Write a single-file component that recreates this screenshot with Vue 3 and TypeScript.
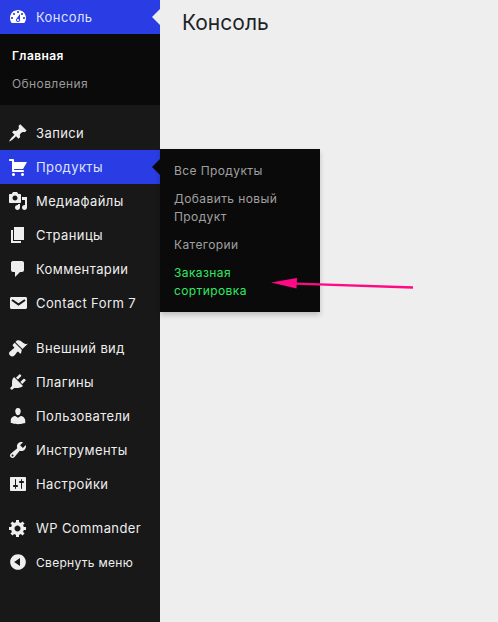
<script setup lang="ts">
interface Item { label: string; d: string; gap?: boolean; current?: boolean; flyout?: boolean; small?: boolean; tight?: boolean }
const icons = {
  dash: 'M3.76 16h12.48c1.1-1.37 1.76-3.11 1.76-5 0-4.42-3.58-8-8-8s-8 3.58-8 8c0 1.89.66 3.63 1.76 5zM10 4c.55 0 1 .45 1 1s-.45 1-1 1-1-.45-1-1 .45-1 1-1zM6 6c.55 0 1 .45 1 1s-.45 1-1 1-1-.45-1-1 .45-1 1-1zm8 0c.55 0 1 .45 1 1s-.45 1-1 1-1-.45-1-1 .45-1 1-1zm-5.37 5.55L12 7v6c0 1.1-.9 2-2 2s-2-.9-2-2c0-.57.24-1.08.63-1.45zM4 10c.55 0 1 .45 1 1s-.45 1-1 1-1-.45-1-1 .45-1 1-1zm12 0c.55 0 1 .45 1 1s-.45 1-1 1-1-.45-1-1 .45-1 1-1zm-5 3c0-.55-.45-1-1-1s-1 .45-1 1 .45 1 1 1 1-.45 1-1z',
  pin: 'M10.44 3.02l1.82-1.82 6.36 6.35-1.83 1.82c-1.05-.68-2.48-.57-3.41.36l-.75.75c-.92.93-1.04 2.35-.35 3.41l-1.83 1.82-2.41-2.41-2.8 2.79c-.42.42-3.38 2.71-3.8 2.29s1.86-3.39 2.28-3.81l2.79-2.79L4.1 9.36l1.83-1.82c1.05.69 2.48.57 3.4-.36l.75-.75c.93-.92 1.05-2.35.36-3.41z',
  cart: 'M6 13h9c.55 0 1 .45 1 1s-.45 1-1 1H5c-.55 0-1-.45-1-1V4H2c-.55 0-1-.45-1-1s.45-1 1-1h3c.55 0 1 .45 1 1v2h13l-4 7H6v1zm-.5 3c.83 0 1.5.67 1.5 1.5S6.33 19 5.5 19 4 18.33 4 17.5 4.67 16 5.5 16zm9 0c.83 0 1.5.67 1.5 1.5s-.67 1.5-1.5 1.5-1.5-.67-1.5-1.5.67-1.5 1.5-1.5z',
  media: 'M13 11V4c0-.55-.45-1-1-1h-1.67L9 1H5L3.67 3H2c-.55 0-1 .45-1 1v7c0 .55.45 1 1 1h10c.55 0 1-.45 1-1zM7 4.5c1.38 0 2.5 1.12 2.5 2.5S8.38 9.5 7 9.5 4.5 8.38 4.5 7 5.62 4.5 7 4.5zM14 6h5v10.5c0 1.38-1.12 2.5-2.5 2.5S14 17.88 14 16.5s1.12-2.5 2.5-2.5c.17 0 .34.02.5.05V9h-3V6zm-4 8.05V13h2v3.5c0 1.38-1.12 2.5-2.5 2.5S7 17.88 7 16.5 8.12 14 9.5 14c.17 0 .34.02.5.05z',
  page: 'M6 15V2h10v13H6zm-1 1h8v2H3V5h2v11z',
  comment: 'M5 2h9c1.1 0 2 .9 2 2v7c0 1.1-.9 2-2 2h-2l-5 5v-5H5c-1.1 0-2-.9-2-2V4c0-1.1.9-2 2-2z',
  mail: 'M3 4h14.5c.8 0 1.5.7 1.5 1.5v9c0 .8-.7 1.5-1.5 1.5H3.5C2.7 16 2 15.3 2 14.5v-9C2 4.7 2.7 4 3.5 4zM4.6 6.2 3.4 7.8l7.1 5 7.1-5-1.2-1.6-5.9 4.1z',
  brush: 'M14.48 11.06L7.41 3.99l1.5-1.5c.5-.56 2.3-.47 3.51.32 1.21.8 1.43 1.28 2.91 2.1 1.18.64 2.45 1.26 4.45.85zm-.71.71L6.7 4.7 4.93 6.47c-.39.39-.39 1.02 0 1.41l1.06 1.06c.39.39.39 1.03 0 1.42-.6.6-1.43 1.11-2.21 1.69-.35.26-.7.53-1.01.84C1.43 13.71 1 14.53 1 15.3c0 .78.29 1.51 1.02 2.24.73.73 1.45 1.02 2.23 1.02.78 0 1.6-.43 2.43-1.26.31-.31.58-.66.84-1.01.58-.78 1.09-1.61 1.69-2.21.39-.39 1.03-.39 1.42 0l1.06 1.06c.39.39 1.02.39 1.41 0z',
  plug: 'M13.11 4.36L9.87 7.6 8 5.73l3.24-3.24c.35-.34 1.05-.2 1.56.32.52.51.66 1.21.31 1.55zm-8 1.77l.91-1.12 9.01 9.01-1.19.84c-.71.71-2.63 1.16-3.82 1.16H6.14L4.9 17.26c-.59.59-1.54.59-2.12 0-.59-.58-.59-1.53 0-2.12l1.24-1.24v-3.88c0-1.13.4-3.19 1.09-3.89zm7.26 3.97l3.24-3.24c.34-.35 1.04-.21 1.55.31.52.51.66 1.21.31 1.55l-3.24 3.25z',
  user: 'M10 9.25c-2.27 0-2.73-3.44-2.73-3.44C7 4.02 7.82 2 9.97 2c2.16 0 2.98 2.02 2.71 3.81 0 0-.41 3.44-2.68 3.44zm0 2.57L12.72 10c2.39 0 4.52 2.33 4.52 4.53v2.49s-3.65 1.13-7.24 1.13c-3.65 0-7.24-1.13-7.24-1.13v-2.49c0-2.25 1.94-4.48 4.47-4.48z',
  tool: 'M16.68 9.77c-1.34 1.34-3.3 1.67-4.95.99l-5.41 6.52c-.99.99-2.59.99-3.58 0s-.99-2.59 0-3.57l6.52-5.42c-.68-1.65-.35-3.61.99-4.95 1.28-1.28 3.12-1.62 4.72-1.06l-2.89 2.89 2.82 2.82 2.86-2.87c.53 1.58.18 3.39-1.08 4.65zM3.81 16.21c.4.39 1.04.39 1.43 0 .4-.4.4-1.04 0-1.43-.39-.4-1.03-.4-1.43 0-.39.39-.39 1.03 0 1.43z',
  sliders: 'M18 16V4c0-.55-.45-1-1-1H3c-.55 0-1 .45-1 1v12c0 .55.45 1 1 1h14c.55 0 1-.45 1-1zM8 11h1c.55 0 1 .45 1 1s-.45 1-1 1H8v1.5c0 .28-.22.5-.5.5s-.5-.22-.5-.5V13H6c-.55 0-1-.45-1-1s.45-1 1-1h1V5.5c0-.28.22-.5.5-.5s.5.22.5.5V11zm5-2h-1c-.55 0-1-.45-1-1s.45-1 1-1h1V5.5c0-.28.22-.5.5-.5s.5.22.5.5V7h1c.55 0 1 .45 1 1s-.45 1-1 1h-1v5.5c0 .28-.22.5-.5.5s-.5-.22-.5-.5V9z',
  gear: 'M18 12h-2.18c-.17.7-.44 1.35-.81 1.93l1.54 1.54-2.1 2.1-1.54-1.54c-.58.36-1.23.63-1.91.79V19H8v-2.18c-.68-.16-1.33-.43-1.91-.79l-1.54 1.54-2.12-2.12 1.54-1.54c-.36-.58-.63-1.23-.79-1.91H1V9.03h2.17c.16-.7.44-1.35.8-1.94L2.43 5.55l2.1-2.1 1.54 1.54c.58-.37 1.24-.64 1.93-.81V2h3v2.18c.68.16 1.33.43 1.91.79l1.54-1.54 2.12 2.12-1.54 1.54c.36.59.64 1.24.8 1.94H18V12zm-8.5 1.5c1.66 0 3-1.34 3-3s-1.34-3-3-3-3 1.34-3 3 1.34 3 3 3z',
  collapse: 'M10 2.16c4.33 0 7.84 3.51 7.84 7.84s-3.51 7.84-7.84 7.84S2.16 14.33 2.16 10 5.71 2.16 10 2.16zm2 11.72V6.12L6.18 9.97z',
}
const items: Item[] = [
  { label: 'Записи', d: icons.pin, gap: true },
  { label: 'Продукты', d: icons.cart, current: true, flyout: true },
  { label: 'Медиафайлы', d: icons.media },
  { label: 'Страницы', d: icons.page },
  { label: 'Комментарии', d: icons.comment },
  { label: 'Contact Form 7', d: icons.mail },
  { label: 'Внешний вид', d: icons.brush, gap: true },
  { label: 'Плагины', d: icons.plug },
  { label: 'Пользователи', d: icons.user },
  { label: 'Инструменты', d: icons.tool },
  { label: 'Настройки', d: icons.sliders, tight: true },
  { label: 'WP Commander', d: icons.gear, gap: true },
  { label: 'Свернуть меню', d: icons.collapse, small: true },
]
const flyoutLinks = [
  { label: 'Все Продукты', on: false },
  { label: 'Добавить новый Продукт', on: false },
  { label: 'Категории', on: false },
  { label: 'Заказная сортировка', on: true },
]
</script>

<template>
  <div class="page">
    <aside class="sidebar">
      <a class="row current">
        <svg class="icon" viewBox="0 0 20 20"><path :d="icons.dash" fill-rule="evenodd" /></svg>
        <span class="label">Консоль</span>
        <i class="notch light"></i>
      </a>
      <div class="sub">
        <a class="sub-link strong">Главная</a>
        <a class="sub-link">Обновления</a>
      </div>
      <a
        v-for="item in items"
        :key="item.label"
        class="row"
        :class="{ current: item.current, gap: item.gap, small: item.small, tight: item.tight }"
      >
        <svg class="icon" viewBox="0 0 20 20"><path :d="item.d" fill-rule="evenodd" /></svg>
        <span class="label">{{ item.label }}</span>
        <template v-if="item.flyout">
          <i class="notch dark"></i>
          <div class="flyout">
            <span
              v-for="link in flyoutLinks"
              :key="link.label"
              class="fly-link"
              :class="{ on: link.on }"
            >{{ link.label }}</span>
          </div>
        </template>
      </a>
    </aside>
    <main class="content">
      <h1 class="title">Консоль</h1>
    </main>
    <svg class="arrow" width="498" height="622" viewBox="0 0 498 622">
      <path d="M413 287.5 296 283.6" stroke="#ff0a84" stroke-width="2.4" fill="none" />
      <path d="M271 282.5 297 278 296.5 288.5z" fill="#ff0a84" />
    </svg>
  </div>
</template>

<style>
html, body { margin: 0; background: #eee; }
</style>

<style scoped>
.page {
  position: relative;
  display: flex;
  width: 498px;
  height: 622px;
  overflow: hidden;
  background: #eee;
  font-family: Inter, "Noto Sans", sans-serif;
}
.sidebar {
  display: flex;
  flex-direction: column;
  flex: 0 0 160px;
  background: #181818;
}
.row {
  position: relative;
  display: flex;
  align-items: center;
  flex: 0 0 34px;
  color: #eee;
  font-size: 13px;
  letter-spacing: 0.4px;
}
.row.tight { flex-basis: 33px; }
.row.gap { margin-top: 11px; }
.row.current { background: #2a3ce4; color: #fff; }
.row.small { font-size: 12px; letter-spacing: 0.3px; }
.row.current .label { color: #dfe3ff; }
.icon {
  flex: none;
  width: 20px;
  height: 20px;
  margin-left: 8px;
  margin-right: 8px;
  fill: #eee;
}
.row.current .icon { fill: #fff; }
.notch {
  position: absolute;
  right: 0;
  top: 9px;
  width: 0;
  height: 0;
  border: 8px solid transparent;
  border-left-width: 0;
}
.notch.light { border-right-color: #eee; }
.notch.dark { border-right-color: #0a0a0a; }
.sub {
  display: flex;
  flex-direction: column;
  gap: 5px;
  padding: 10px 0 10px 12px;
  background: #0a0a0a;
}
.sub-link {
  font-size: 12px;
  line-height: 23px;
  letter-spacing: 0.4px;
  color: #9a9a9a;
}
.sub-link.strong { color: #fff; font-weight: 600; }
.flyout {
  position: absolute;
  left: 160px;
  top: -1px;
  box-sizing: border-box;
  width: 160px;
  height: 163px;
  padding: 13px 14px 0;
  display: flex;
  flex-direction: column;
  gap: 10px;
  background: #0a0a0a;
  box-shadow: 0 3px 5px rgba(0, 0, 0, 0.2);
  z-index: 2;
}
.fly-link {
  font-size: 12px;
  line-height: 18px;
  letter-spacing: 0.4px;
  color: #a0a0a0;
}
.fly-link.on { color: #2fe862; }
.content { flex: 1; padding: 9px 22px; }
.title {
  margin: 0;
  font-size: 21px;
  line-height: 27px;
  font-weight: 400;
  color: #1d2327;
}
.arrow { position: absolute; left: 0; top: 0; z-index: 3; pointer-events: none; }
</style>
